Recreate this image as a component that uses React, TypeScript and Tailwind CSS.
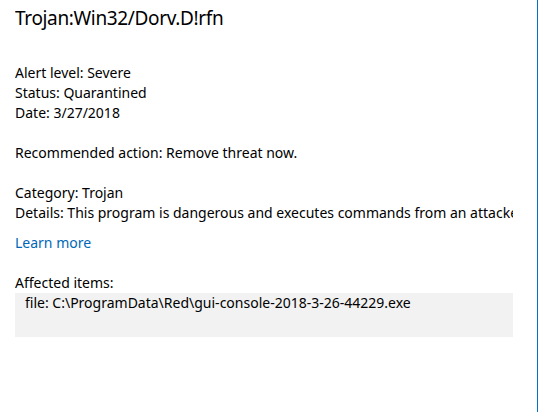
const lines = {
  alert: "Alert level: Severe",
  status: "Status: Quarantined",
  date: "Date: 3/27/2018",
};

const App = () => {
  return (
    <div className="flex h-[412px] w-[539px] overflow-hidden bg-white text-black font-['Noto_Sans',sans-serif]">
      <div className="w-[537px] pl-[15px]">
        <div className="w-[498px] overflow-hidden whitespace-nowrap">
          <h1 className="mt-[4px] text-[19px] leading-[28px] font-normal tracking-[-0.35px]">
            Trojan:Win32/Dorv.D!rfn
          </h1>
          <div className="mt-[31px] text-[14px] leading-[20px]">
            <p>{lines.alert}</p>
            <p>{lines.status}</p>
            <p>{lines.date}</p>
            <p className="mt-[20px]">Recommended action: Remove threat now.</p>
            <p className="mt-[20px]">Category: Trojan</p>
            <p>
              Details: This program is dangerous and executes commands from an
              attacker.
            </p>
            <a className="mt-[10px] block text-[#0067b8]">Learn more</a>
            <p className="mt-[20px]">Affected items:</p>
            <div className="h-[44px] bg-[#f2f2f2] pl-[10px]">
              file: C:\ProgramData\Red\gui-console-2018-3-26-44229.exe
            </div>
          </div>
        </div>
      </div>
      <div className="w-[1px] bg-[#0071cc]" />
      <div className="w-[1px] bg-white" />
    </div>
  );
};

export default App;
